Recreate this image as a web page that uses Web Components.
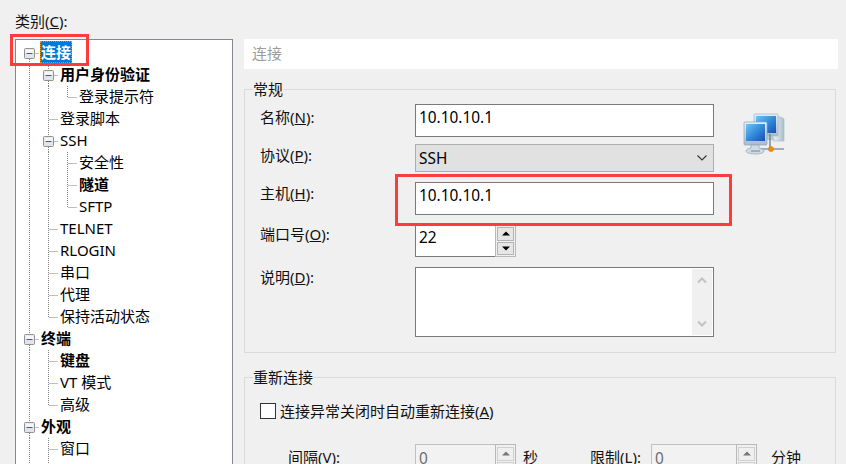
<!DOCTYPE html>
<html lang="zh"><head><meta charset="utf-8"><title>连接</title>
<style>
html,body{margin:0;padding:0;height:464px;overflow:hidden;background:#f0f0f0}
body{font:15px/22px "Noto Sans","Noto Sans CJK SC",sans-serif;color:#000}
</style></head><body>
<x-app>
  <div slot="left">
    <x-caption>类别(<u>C</u>):</x-caption>
    <x-tree>
      <x-row level="0" exp bold sel v="">连接</x-row>
      <x-row level="1" exp bold v="13.5">用户身份验证</x-row>
      <x-row level="2" last v="13.5,32.5">登录提示符</x-row>
      <x-row level="1" v="13.5">登录脚本</x-row>
      <x-row level="1" exp v="13.5">SSH</x-row>
      <x-row level="2" v="13.5,32.5">安全性</x-row>
      <x-row level="2" bold v="13.5,32.5">隧道</x-row>
      <x-row level="2" last v="13.5,32.5">SFTP</x-row>
      <x-row level="1" v="13.5">TELNET</x-row>
      <x-row level="1" v="13.5">RLOGIN</x-row>
      <x-row level="1" v="13.5">串口</x-row>
      <x-row level="1" v="13.5">代理</x-row>
      <x-row level="1" last v="13.5">保持活动状态</x-row>
      <x-row level="0" exp bold top v="">终端</x-row>
      <x-row level="1" bold v="13.5">键盘</x-row>
      <x-row level="1" v="13.5">VT 模式</x-row>
      <x-row level="1" last v="13.5">高级</x-row>
      <x-row level="0" exp bold top v="">外观</x-row>
      <x-row level="1" v="13.5">窗口</x-row>
      <x-row level="1" v="13.5"></x-row>
    </x-tree>
  </div>
  <div slot="right">
    <x-header>连接</x-header>
    <x-group legend="常规" style="--h:264px;--mt:20px">
      <x-icon-net></x-icon-net>
      <x-field style="--mt:5px;--lp:2px"><span slot="label">名称(<u>N</u>):</span><x-input style="--ih:33px">10.10.10.1</x-input></x-field>
      <x-field style="--mt:7px;--lp:0px"><span slot="label">协议(<u>P</u>):</span><x-select>SSH</x-select></x-field>
      <x-field style="--mt:10px;--lp:0px"><span slot="label">主机(<u>H</u>):</span><x-input style="--ih:33px">10.10.10.1</x-input></x-field>
      <x-field style="--mt:9px;--lp:-1px"><span slot="label">端口号(<u>O</u>):</span><x-spin style="--w:101px">22</x-spin></x-field>
      <x-field style="--mt:10px;--lp:-1px"><span slot="label">说明(<u>D</u>):</span><x-memo></x-memo></x-field>
    </x-group>
    <x-group legend="重新连接" style="--h:120px;--mt:24px">
      <x-check style="--mt:13px">连接异常关闭时自动重新连接(<u>A</u>)</x-check>
      <x-inline-row style="--mt:22px">
        <x-lab style="--pl:28px;--w:155px">间隔(<u>V</u>):</x-lab>
        <x-spin disabled style="--w:101px">0</x-spin>
        <x-lab style="--pl:7px;--w:74px">秒</x-lab>
        <x-lab style="--pl:0px;--w:61px">限制(<u>L</u>):</x-lab>
        <x-spin disabled style="--w:106px">0</x-spin>
        <x-lab style="--pl:14px;--w:60px">分钟</x-lab>
      </x-inline-row>
    </x-group>
  </div>
  <x-mark slot="over" style="left:10px;top:34px;width:73px;height:26px"></x-mark>
  <x-mark slot="over" style="left:395px;top:174px;width:331px;height:46px"></x-mark>
</x-app>
<script>
function def(name,css,html,init){
  customElements.define(name,class extends HTMLElement{
    constructor(){super();const r=this.attachShadow({mode:'open'});
      r.innerHTML='<style>'+css+'</style>'+(typeof html==='function'?html(this):html);}
    connectedCallback(){ if(init) init(this); }
  });
}
def('x-app',
 ':host{display:grid;grid-template-columns:244px 594px;height:464px;overflow:hidden;position:relative}',
 '<slot name="left"></slot><slot name="right"></slot><slot name="over"></slot>');
def('x-caption',':host{display:block;padding:11px 0 0 15px;height:28px;line-height:20px;color:#111}','<slot></slot>');
def('x-tree',':host{display:block;margin-left:15px;width:216px;height:430px;overflow:hidden;background:#fff;border:1px solid #828790;padding-top:2px}','<slot></slot>');
def('x-row',`:host{display:block;height:22px}
 .r{display:flex;height:22px;position:relative;white-space:nowrap}
 svg{flex:none;display:block}
 .t{line-height:20px;height:21px;color:#000}
 .b{font-weight:700}
 .s{background:#0078d7;color:#fff;outline:1px dotted #e8901a;outline-offset:-1px;margin:-1px 0 0 -1px;padding:0 1px;line-height:22px;height:22px}
 `,'<div class="r"></div>',el=>{
   const level=+el.getAttribute('level');
   const W=[25,44,63][level];
   const cx=[13.5,32.5,51.5][level];
   const exp=el.hasAttribute('exp'),last=el.hasAttribute('last'),top=el.hasAttribute('top');
   const vs=(el.getAttribute('v')||'').split(',').filter(Boolean);
   const d='stroke="#7f7f7f" stroke-width="1" stroke-dasharray="1 1"';
   let s='';
   vs.forEach(x=>{s+=`<path d="M${x} 0V22" ${d}/>`});
   if(level===0){ if(top) s+=`<path d="M${cx} 0V6" ${d}/>`; s+=`<path d="M${cx} 17V22" ${d}/>`; }
   else if(exp){ s+=`<path d="M${cx} 0V6M${cx} 17V22" ${d}/>`; }
   else { s+=`<path d="M${cx} 0V${last?11.5:22}" ${d}/>`; }
   s+=`<path d="M${cx+(exp?5:1)} 11.5H${W-2}" ${d}/>`;
   if(exp){ s+=`<rect x="${cx-5}" y="6.5" width="10" height="10" rx="1" fill="#e4e4e4" stroke="#919191"/><rect x="${cx-4}" y="7.5" width="8" height="4" fill="#f6f6f6"/><path d="M${cx-3} 11.5H${cx+3}" stroke="#3c5a9a" stroke-width="1"/>`; }
   const sr=el.shadowRoot.querySelector('.r');
   const cls='t'+(el.hasAttribute('bold')?' b':'')+(el.hasAttribute('sel')?' s':'');
   sr.innerHTML=`<svg width="${W}" height="22" viewBox="0 0 ${W} 22">${s}</svg><span class="${cls}"><slot></slot></span>`;
 });
def('x-header',':host{display:block;height:30px;margin-top:39px;background:#fff;color:#9b9b9b;line-height:29px;padding-left:8px;box-sizing:border-box}','<slot></slot>');
def('x-group',`:host{display:block;box-sizing:border-box;width:592px;height:var(--h);margin-top:var(--mt);border:1px solid #dadada;padding-left:15px;position:relative}
 .l{margin:-11px 0 0 -7px;width:fit-content;background:#f0f0f0;line-height:20px;height:20px;color:#111}`,
 el=>`<div class="l">${el.getAttribute('legend')}</div><slot></slot>`);
def('x-field',`:host{display:flex;margin-top:var(--mt)}
 .lb{flex:none;width:155px;margin-top:var(--lp);line-height:22px;color:#111}`,
 '<div class="lb"><slot name="label"></slot></div><slot></slot>');
def('x-input',`:host{display:block;box-sizing:border-box;width:299px;height:var(--ih);background:#fff;border:1px solid #7a7a7a;padding-left:3px;font-size:15.4px;line-height:26px;color:#000}`,'<slot></slot>');
def('x-select',`:host{display:flex;box-sizing:border-box;width:299px;height:28px;background:#e1e1e1;border:1px solid #adadad;padding:2px 6px 0 3px;font-size:15.4px;line-height:24px;justify-content:space-between;align-items:center}
 svg{display:block;margin-top:-2px}`,
 '<span><slot></slot></span><svg width="10" height="6" viewBox="0 0 10 6"><path d="M.5.5 5 5 9.5.5" fill="none" stroke="#333" stroke-width="1.1"/></svg>');
def('x-spin',`:host{display:flex;box-sizing:border-box;width:var(--w);height:33px;flex:none}
 .f{flex:1;box-sizing:border-box;background:#fff;border:1px solid #7a7a7a;border-right:0;border-top:0;padding-left:3px;font-size:15.4px;line-height:28px}
 .bs{flex:none;box-sizing:border-box;width:21px;border:1px solid #b8b8b8;border-left:1px solid #b8b8b8;padding:2px 1px 1px;display:flex;flex-direction:column;gap:1px;background:#f0f0f0}
 .u{flex:1;box-sizing:border-box;border:1px solid #b4b4b4;background:#e6e6e6;display:flex;align-items:center;justify-content:center}
 :host([disabled]) .f{background:#f2f2f2;border-color:#c0c0c0;border-top:1px solid #c0c0c0;color:#6d6d6d}
 :host([disabled]) .u{background:#efefef;border-color:#d0d0d0}
 :host([disabled]) path{fill:#777}`,
 '<div class="f"><slot></slot></div><div class="bs"><div class="u"><svg width="8" height="5"><path d="M4 .5 8 4.5H0Z"/></svg></div><div class="u"><svg width="8" height="5"><path d="M0 .5H8L4 4.5Z"/></svg></div></div>');
def('x-memo',`:host{display:flex;justify-content:flex-end;box-sizing:border-box;width:299px;height:70px;background:#fff;border:1px solid #7a7a7a;padding:1px}
 .sb{width:20px;background:#f0f0f0;display:flex;flex-direction:column;justify-content:space-between;align-items:center;padding:8px 0;box-sizing:border-box}
 svg{display:block}`,
 '<div class="sb"><svg width="10" height="7" viewBox="0 0 10 7"><path d="M1 5.5 5 1.5 9 5.5" fill="none" stroke="#c2c2c2" stroke-width="2"/></svg><svg width="10" height="7" viewBox="0 0 10 7"><path d="M1 1.5 5 5.5 9 1.5" fill="none" stroke="#c2c2c2" stroke-width="2"/></svg></div>');
def('x-check',`:host{display:flex;align-items:center;gap:4px;margin-top:var(--mt);height:22px;color:#111}
 .b{width:16px;height:16px;box-sizing:border-box;border:1px solid #333;background:#fff;flex:none}`,
 '<div class="b"></div><span><slot></slot></span>');
def('x-inline-row',':host{display:flex;margin-top:var(--mt);height:33px}','<slot></slot>');
def('x-lab',':host{display:block;flex:none;box-sizing:border-box;width:var(--w);padding-left:var(--pl);line-height:27px;color:#111}','<slot></slot>');
def('x-mark',':host{position:absolute;display:block;border:3px solid #ff3b3b;box-sizing:content-box;pointer-events:none}','');
def('x-icon-net',`:host{position:absolute;left:498px;top:23px;width:42px;height:43px;display:block}
 svg{display:block}`,
 `<svg width="42" height="43" viewBox="0 0 42 43">
 <defs>
  <linearGradient id="sc" x1="0" y1="0" x2="1" y2="1"><stop offset="0" stop-color="#6fc4f2"/><stop offset=".55" stop-color="#2f86d8"/><stop offset="1" stop-color="#1c4fae"/></linearGradient>
  <linearGradient id="fr" x1="0" y1="0" x2="0" y2="1"><stop offset="0" stop-color="#e6eef4"/><stop offset="1" stop-color="#a9bccb"/></linearGradient>
  <linearGradient id="tw" x1="0" y1="0" x2="1" y2="0"><stop offset="0" stop-color="#f3f7fa"/><stop offset="1" stop-color="#a8bccb"/></linearGradient>
 </defs>
 <path d="M30 4h8l3 2v22h-11z" fill="url(#tw)" stroke="#aebfcc" stroke-width=".7"/>
 <rect x="11" y="1" width="24" height="22" rx="1" fill="url(#fr)" stroke="#9fb3c3" stroke-width=".7"/>
 <rect x="13" y="3" width="20" height="17" fill="url(#sc)"/>
 <path d="M18 23h12l2 4H16z" fill="#b9c9d6"/>
 <path d="M27 21v14" stroke="#6b8496" stroke-width="1.4"/>
 <path d="M10 36H41" stroke="#9cb0bf" stroke-width="2"/>
 <rect x="1" y="9" width="23" height="23" rx="1" fill="url(#fr)" stroke="#8fa5b6" stroke-width=".7"/>
 <rect x="3" y="11" width="19" height="17" fill="url(#sc)"/>
 <path d="M8 32h8v3c3 .5 5 1.5 5 3 0 2-4 3-8.500 3S3 40 3 38c0-1.500 2-2.500 5-3z" fill="#cfdbe4" stroke="#8fa5b6" stroke-width=".7"/>
 <path d="M8 38h9" stroke="#7d93a4" stroke-width="1.200"/>
 <circle cx="28" cy="36" r="2.600" fill="#f08a10" stroke="#d97a08" stroke-width=".5"/>
 </svg>`);
</script>
</body></html>
